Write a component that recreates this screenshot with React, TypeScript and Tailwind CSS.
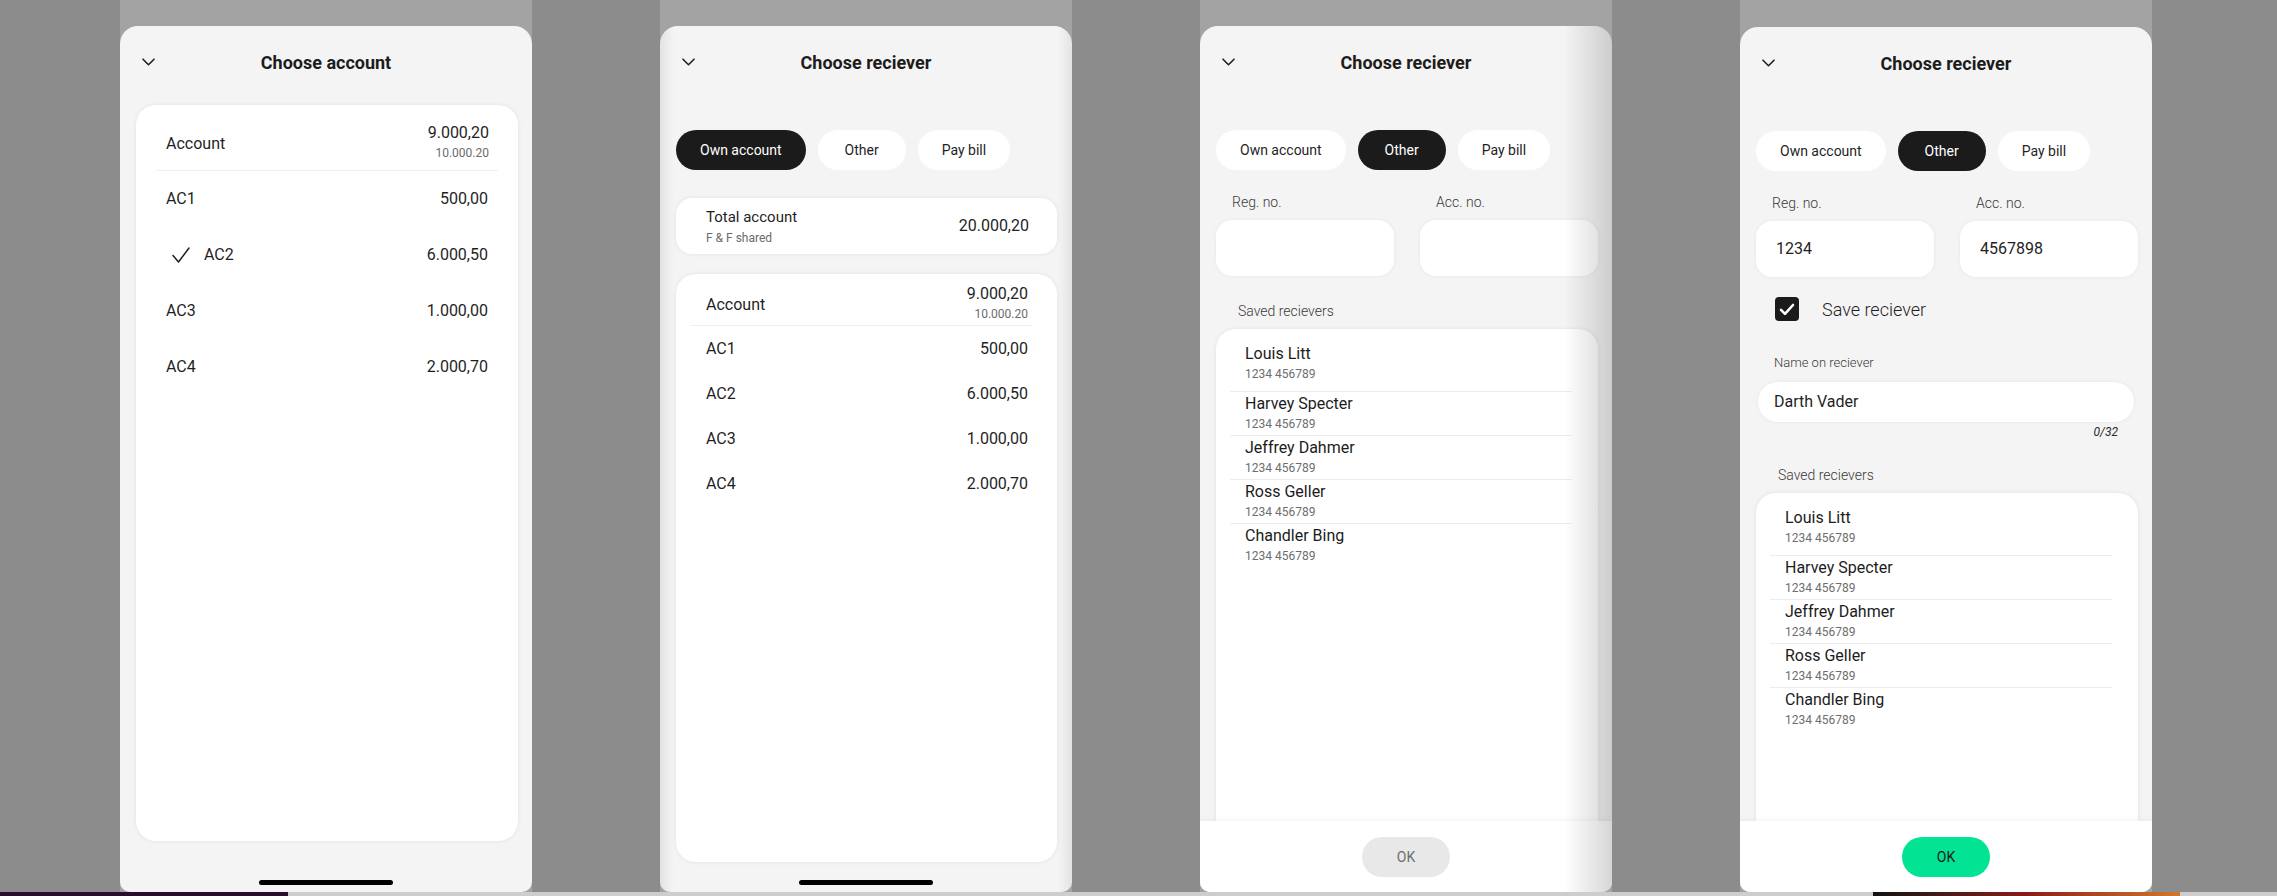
import type { ReactNode } from "react"

const accounts = [
  { name: "AC1", amount: "500,00" },
  { name: "AC2", amount: "6.000,50" },
  { name: "AC3", amount: "1.000,00" },
  { name: "AC4", amount: "2.000,70" },
]

const receivers = ["Louis Litt", "Harvey Specter", "Jeffrey Dahmer", "Ross Geller", "Chandler Bing"]

function Chevron() {
  return (
    <svg width="13" height="8" viewBox="0 0 13 8" fill="none">
      <path d="M1 1.2l5.5 5.5 5.5-5.5" stroke="#222" strokeWidth="1.6" strokeLinecap="round" strokeLinejoin="round" />
    </svg>
  )
}

function Phone({ title, sheetTop = "mt-[26px]", children }: { title: string; sheetTop?: string; children: ReactNode }) {
  return (
    <div className="w-[412px] h-full bg-[#a3a3a3] flex flex-col">
      <div className={`${sheetTop} flex-1 bg-[#f4f4f4] rounded-t-[18px] rounded-b-[10px] flex flex-col relative overflow-hidden`}>
        <div className="h-[72px] shrink-0 grid grid-cols-[1fr_auto_1fr] items-center">
          <div className="pl-[22px] flex items-center">
            <Chevron />
          </div>
          <h1 className="text-[18px] font-bold text-[#1c1c1c]">{title}</h1>
          <div />
        </div>
        {children}
      </div>
    </div>
  )
}

function Pills({ active }: { active: string }) {
  return (
    <div className="mt-8 flex gap-3 pl-4 shrink-0">
      {["Own account", "Other", "Pay bill"].map((p) => (
        <div
          key={p}
          className={
            p === active
              ? "h-10 min-w-[88px] px-6 rounded-full bg-[#1b1b1b] text-white text-sm flex items-center justify-center"
              : "h-10 min-w-[88px] px-6 rounded-full bg-white text-[#1f1f1f] text-sm flex items-center justify-center"
          }
        >
          {p}
        </div>
      ))}
    </div>
  )
}

function HomeBar({ h }: { h: string }) {
  return (
    <div className={`${h} shrink-0 flex items-end justify-center pb-[7px]`}>
      <div className="w-[134px] h-[5px] rounded-full bg-black" />
    </div>
  )
}

function AccountHead({ pad }: { pad: string }) {
  return (
    <div className={`flex items-center justify-between pl-[30px] pr-[29px] ${pad}`}>
      <span className="text-base mt-[4px]">Account</span>
      <div className="text-right">
        <div className="text-base leading-[19px]">9.000,20</div>
        <div className="text-xs leading-[14px] mt-[4px] text-[#6b6b6b]">10.000.20</div>
      </div>
    </div>
  )
}

function ChooseAccount() {
  return (
    <Phone title="Choose account">
      <div className="mt-[7px] ml-4 mr-[14px] flex-1 bg-white rounded-[20px] shadow-[0_0_4px_rgba(0,0,0,0.08)]">
        <AccountHead pad="pt-[18px] pb-[10px]" />
        <div className="mx-5 h-px bg-[#efefef]" />
        {accounts.map((a) => (
          <div key={a.name} className="h-[56px] flex items-center justify-between pr-[30px]">
            {a.name === "AC2" ? (
              <div className="pl-[36px] flex items-center gap-[14px]">
                <svg width="18" height="16" viewBox="0 0 18 16" fill="none">
                  <path d="M1 8.5l5.5 6.5L17 1" stroke="#1f1f1f" strokeWidth="1.5" strokeLinecap="round" strokeLinejoin="round" />
                </svg>
                <span className="text-base">{a.name}</span>
              </div>
            ) : (
              <span className="pl-[30px] text-base">{a.name}</span>
            )}
            <span className="text-base">{a.amount}</span>
          </div>
        ))}
      </div>
      <HomeBar h="h-[51px]" />
    </Phone>
  )
}

function OwnAccount() {
  return (
    <Phone title="Choose reciever">
      <Pills active="Own account" />
      <div className="mt-[28px] ml-4 mr-[15px] h-[56px] shrink-0 bg-white rounded-[16px] shadow-[0_0_4px_rgba(0,0,0,0.08)] flex items-center justify-between pl-[30px] pr-[28px]">
        <div>
          <div className="text-[15px] leading-[18px]">Total account</div>
          <div className="text-xs leading-[14px] mt-[5px] text-[#6b6b6b]">F &amp; F shared</div>
        </div>
        <span className="text-base">20.000,20</span>
      </div>
      <div className="mt-5 ml-4 mr-[15px] flex-1 bg-white rounded-[20px] shadow-[0_0_4px_rgba(0,0,0,0.08)]">
        <AccountHead pad="pt-[10px] pb-[4px]" />
        <div className="ml-[14px] mr-[25px] h-px bg-[#efefef]" />
        {accounts.map((a) => (
          <div key={a.name} className="h-[45px] flex items-center justify-between pl-[30px] pr-[29px]">
            <span className="text-base">{a.name}</span>
            <span className="text-base">{a.amount}</span>
          </div>
        ))}
      </div>
      <HomeBar h="h-[30px]" />
      <div className="absolute inset-y-0 left-0 w-[14px] bg-gradient-to-r from-[rgba(0,0,0,0.07)] to-transparent pointer-events-none" />
      <div className="absolute inset-y-0 right-0 w-[14px] bg-gradient-to-l from-[rgba(0,0,0,0.07)] to-transparent pointer-events-none" />
    </Phone>
  )
}

function Field({ label, value }: { label: string; value?: string }) {
  return (
    <div>
      <div className="pl-4 text-sm leading-4 font-light text-[#3a3a3a]">{label}</div>
      <div className="mt-[10px] h-[56px] bg-white rounded-[16px] shadow-[0_0_4px_rgba(0,0,0,0.06)] flex items-center pl-5 text-base">
        {value}
      </div>
    </div>
  )
}

function SavedList() {
  return (
    <div className="mt-[10px] ml-4 mr-[14px] flex-1 bg-white rounded-t-[20px] shadow-[0_0_4px_rgba(0,0,0,0.08)] pt-[13px]">
      {receivers.map((r, i) => (
        <div key={r}>
          <div className={i === 0 ? "pl-[29px] pt-[2px] pb-[10px]" : "pl-[29px] pt-[2px] pb-[4px]"}>
            <div className="text-base leading-[19px] text-[#1c1c1c]">{r}</div>
            <div className="text-xs leading-[14px] mt-1 text-[#6e6e6e]">1234 456789</div>
          </div>
          {i < receivers.length - 1 && <div className="ml-[14px] mr-[26px] h-px bg-[#ededed]" />}
        </div>
      ))}
    </div>
  )
}

function Footer({ enabled }: { enabled: boolean }) {
  return (
    <div className="h-[71px] shrink-0 bg-white shadow-[0_-2px_5px_rgba(0,0,0,0.04)] flex items-center justify-center relative z-10">
      <div
        className={
          enabled
            ? "h-10 w-[88px] rounded-full bg-[#02e394] text-[#1a1a1a] text-sm flex items-center justify-center"
            : "h-10 w-[88px] rounded-full bg-[#e8e8e8] text-[#6e6e6e] text-sm flex items-center justify-center"
        }
      >
        OK
      </div>
    </div>
  )
}

function OtherEmpty() {
  return (
    <Phone title="Choose reciever">
      <Pills active="Other" />
      <div className="mt-6 grid grid-cols-2 gap-x-[26px] pl-4 pr-[14px] shrink-0">
        <Field label="Reg. no." />
        <Field label="Acc. no." />
      </div>
      <div className="mt-[27px] pl-[38px] text-sm leading-4 font-light text-[#3a3a3a] shrink-0">Saved recievers</div>
      <SavedList />
      <Footer enabled={false} />
      <div className="absolute inset-y-0 right-0 w-[48px] bg-gradient-to-l from-[rgba(0,0,0,0.16)] to-transparent pointer-events-none z-20" />
    </Phone>
  )
}

function OtherFilled() {
  return (
    <Phone title="Choose reciever" sheetTop="mt-[27px]">
      <Pills active="Other" />
      <div className="mt-6 grid grid-cols-2 gap-x-[26px] pl-4 pr-[14px] shrink-0">
        <Field label="Reg. no." value="1234" />
        <Field label="Acc. no." value="4567898" />
      </div>
      <div className="mt-5 h-6 flex items-center pl-[35px] gap-[23px] shrink-0">
        <div className="w-6 h-6 rounded-[4px] bg-[#1b1b1b] flex items-center justify-center">
          <svg width="16" height="13" viewBox="0 0 16 13" fill="none">
            <path d="M2 6.8l4 4L14 2" stroke="#fff" strokeWidth="2.6" strokeLinecap="round" strokeLinejoin="round" />
          </svg>
        </div>
        <span className="text-[18px] font-light text-[#1f1f1f]">Save reciever</span>
      </div>
      <div className="mt-[34px] pl-[34px] text-[13px] leading-4 font-light text-[#3a3a3a] shrink-0">Name on reciever</div>
      <div className="mt-[11px] mx-[18px] h-10 shrink-0 rounded-full bg-white shadow-[0_0_4px_rgba(0,0,0,0.06)] flex items-center pl-4 text-base">
        Darth Vader
      </div>
      <div className="mt-[3px] pr-[34px] text-right text-xs italic leading-[14px] text-[#2a2a2a] shrink-0">0/32</div>
      <div className="mt-[28px] pl-[38px] text-sm leading-4 font-light text-[#3a3a3a] shrink-0">Saved recievers</div>
      <SavedList />
      <Footer enabled />
    </Phone>
  )
}

export default function App() {
  return (
    <div className="w-[2277px] h-[896px] bg-[#8c8c8c] overflow-hidden flex flex-col font-[Roboto,'Noto_Sans',sans-serif] text-[#1f1f1f]">
      <div className="h-[892px] shrink-0 flex pl-[120px] gap-[128px]">
        <ChooseAccount />
        <OwnAccount />
        <OtherEmpty />
        <OtherFilled />
      </div>
      <div className="h-[4px] flex">
        <div className="w-[288px] bg-[#2a0f2c]" />
        <div className="w-[1585px] bg-[#cdcdcd]" />
        <div className="w-[307px] bg-gradient-to-r from-[#111] via-[#8a1a1a] to-[#d0782a]" />
        <div className="flex-1 bg-[#cdcdcd]" />
      </div>
    </div>
  )
}
